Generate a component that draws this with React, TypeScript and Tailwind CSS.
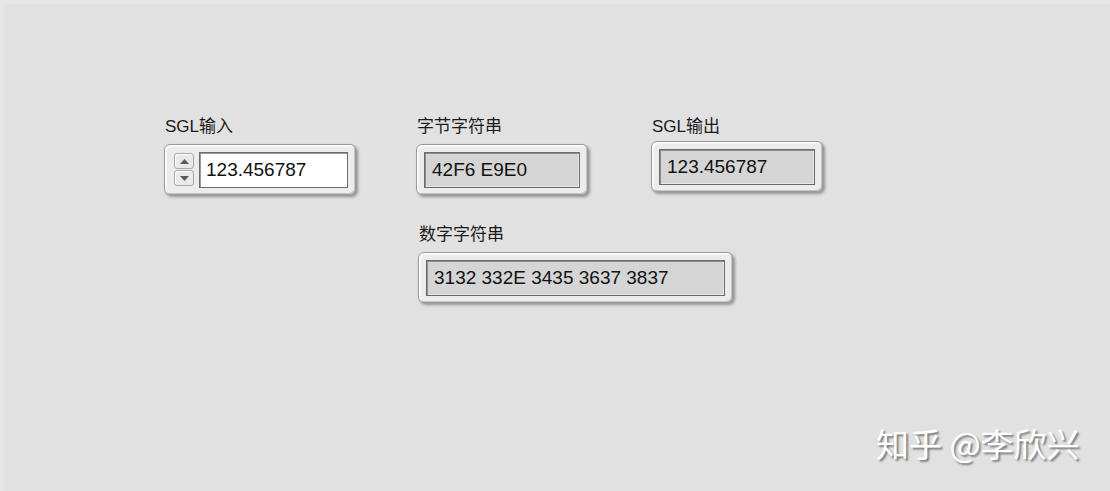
const labelFont = { fontFamily: '"Liberation Sans", "Noto Sans CJK SC", sans-serif' };

function Label({ text, tight }: { text: string; tight?: boolean }) {
  return (
    <div
      className={tight ? 'text-[17px] leading-[20px] text-[#1a1a1a] mb-[4px] pl-[1px]' : 'text-[17px] leading-[20px] text-[#1a1a1a] mb-[7px] pl-[1px]'}
      style={labelFont}
    >
      {text}
    </div>
  );
}

function Frame({ width, children }: { width: number; children: React.ReactNode }) {
  return (
    <div
      className="h-[51px] rounded-[6px] border border-[#9a9a9a] bg-[#ececec] flex items-center px-[7px] shadow-[inset_1px_1px_0_#ffffff,inset_2px_2px_0_#f6f6f6,inset_-1px_-1px_0_#c4c4c4,2px_2px_3px_rgba(0,0,0,0.35)]"
      style={{ width }}
    >
      {children}
    </div>
  );
}

function Indicator({ label, value, width, tight }: { label: string; value: string; width: number; tight?: boolean }) {
  return (
    <div>
      <Label text={label} tight={tight} />
      <Frame width={width}>
        <div
          className="flex-1 h-[36px] border border-[#6a6a6a] bg-[#d5d5d5] flex items-center pl-[7px] pt-[1px] text-[19px] text-[#111] shadow-[inset_1px_1px_0_#8e8e8e,inset_-1px_-1px_0_#e6e6e6]"
          style={labelFont}
        >
          {value}
        </div>
      </Frame>
    </div>
  );
}

function Spin({ up }: { up: boolean }) {
  return (
    <div className="w-[20px] h-[16px] rounded-[3px] border border-[#a8a8a8] bg-[#e9e9e9] flex items-center justify-center shadow-[inset_1px_1px_0_#fff]">
      <svg width="9" height="5" viewBox="0 0 9 5">
        {up ? <polygon points="0,5 9,5 4.5,0" fill="#5a5a5a" /> : <polygon points="0,0 9,0 4.5,5" fill="#5a5a5a" />}
      </svg>
    </div>
  );
}

export default function App() {
  return (
    <div className="w-[1110px] h-[491px] bg-[#e1e1e1] border-t-[4px] border-l-[4px] border-[#e6e6e6] overflow-hidden relative">
      <div className="pt-[113px] pl-[160px]">
        <div className="flex items-start">
          <div>
            <Label text="SGL输入" />
            <Frame width={192}>
              <div className="flex flex-col gap-[1px] ml-[2px] mr-[5px]">
                <Spin up />
                <Spin up={false} />
              </div>
              <div
                className="flex-1 h-[36px] border border-[#6a6a6a] bg-white flex items-center pl-[6px] pt-[1px] text-[19px] text-[#111] shadow-[inset_1px_1px_0_#9a9a9a]"
                style={labelFont}
              >
                123.456787
              </div>
            </Frame>
          </div>
          <div className="ml-[60px]">
            <Indicator label="字节字符串" value="42F6 E9E0" width={172} />
          </div>
          <div className="ml-[63px]">
            <Indicator label="SGL输出" value="123.456787" width={172} tight />
          </div>
        </div>
        <div className="ml-[254px] mt-[30px]">
          <Indicator label="数字字符串" value="3132 332E 3435 3637 3837" width={315} />
        </div>
      </div>
      <div
        className="absolute left-[872px] top-[418px] text-[33px] leading-[42px] text-white [text-shadow:2px_2px_2px_rgba(0,0,0,0.45)]"
        style={{ fontFamily: '"Noto Sans CJK SC", sans-serif' }}
      >
        知乎 @李欣兴
      </div>
    </div>
  );
}
